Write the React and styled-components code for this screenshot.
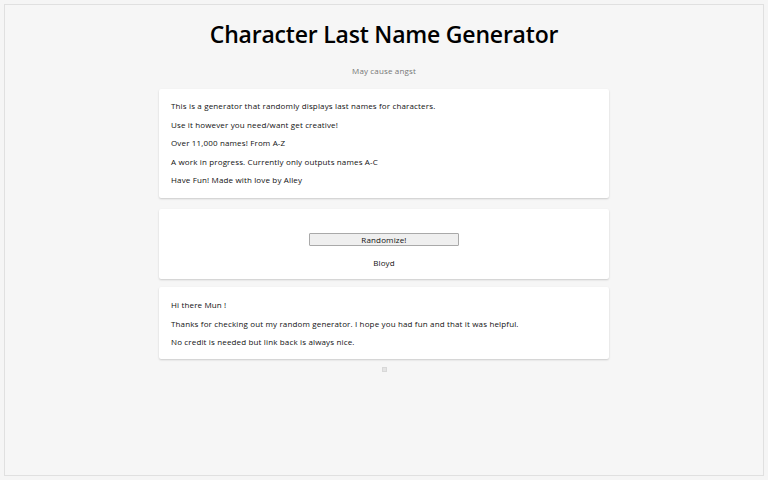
import React from "react";
import styled, { createGlobalStyle } from "styled-components";

const Global = createGlobalStyle`
  html, body { margin: 0; padding: 0; background: #f5f5f5; }
  body { font-family: "Open Sans", "Liberation Sans", sans-serif; color: #111; }
  * { box-sizing: border-box; }
`;

const Frame = styled.div`
  margin: 4px;
  height: 472px;
  border: 1px solid #e0e0e0;
  background: #f6f6f6;
  padding-top: 14px;
  display: flex;
  flex-direction: column;
  align-items: center;
`;

const Title = styled.h1`
  margin: 0;
  font-size: 23px;
  line-height: 30px;
  font-weight: 600;
  color: #000;
  letter-spacing: -0.2px;
`;

const Subtitle = styled.p`
  margin: 16px 0 12px;
  font-size: 8px;
  line-height: 12px;
  color: #777;
  letter-spacing: 0.15px;
`;

const Card = styled.section`
  width: 450px;
  background: #fff;
  border-radius: 2px;
  box-shadow: 0 1px 2px rgba(0, 0, 0, 0.18);
  padding: ${(p) => p.$pad};
  margin-bottom: ${(p) => p.$mb || "0px"};
  display: flex;
  flex-direction: column;
  align-items: ${(p) => (p.$center ? "center" : "stretch")};
`;

const Line = styled.p`
  margin: 0 0 6.5px;
  font-size: 8px;
  line-height: 12px;
  letter-spacing: 0.15px;
  color: #111;
  &:last-child { margin-bottom: 0; }
`;

const Button = styled.button`
  width: 150px;
  height: 13px;
  padding: 0;
  background: #efefef;
  border: 1px solid #a9a9a9;
  border-radius: 1px;
  font-family: inherit;
  font-size: 8px;
  letter-spacing: 0.15px;
  line-height: 11px;
  color: #111;
`;

const Result = styled.p`
  margin: 11px 0 0;
  font-size: 8px;
  letter-spacing: 0.15px;
  line-height: 12px;
`;

const Dot = styled.div`
  width: 5px;
  height: 5px;
  margin-top: 8px;
  background: #e4e4e4;
  border: 1px solid #d8d8d8;
`;

export default function App() {
  return (
    <>
      <Global />
      <Frame>
        <Title>Character Last Name Generator</Title>
        <Subtitle>May cause angst</Subtitle>
        <Card $pad="11px 12px 12px" $mb="11px">
          <Line>This is a generator that randomly displays last names for characters.</Line>
          <Line>Use it however you need/want get creative!</Line>
          <Line>Over 11,000 names! From A-Z</Line>
          <Line>A work in progress. Currently only outputs names A-C</Line>
          <Line>Have Fun! Made with love by Alley</Line>
        </Card>
        <Card $pad="24px 12px 10px" $mb="8px" $center>
          <Button>Randomize!</Button>
          <Result>Bloyd</Result>
        </Card>
        <Card $pad="12px 12px 11px">
          <Line>Hi there Mun !</Line>
          <Line>Thanks for checking out my random generator. I hope you had fun and that it was helpful.</Line>
          <Line>No credit is needed but link back is always nice.</Line>
        </Card>
        <Dot />
      </Frame>
    </>
  );
}
